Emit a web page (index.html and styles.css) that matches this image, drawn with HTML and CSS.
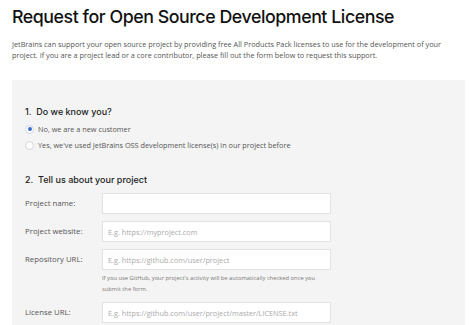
FILE: index.html
```html
<!DOCTYPE html>
<html>
<head>
  <meta charset="utf-8">
  <title>Request for Open Source Development License</title>
  <link rel="stylesheet" href="styles.css">
</head>
<body>
  <div class="page">
    <h1>Request for Open Source Development License</h1>
    <p class="intro">JetBrains can support your open source project by providing free All Products Pack licenses to use for the development of your project. If you are a project lead or a core contributor, please fill out the form below to request this support.</p>

    <form class="panel">
      <!-- 1. Do we know you -->
      <h2>1.&nbsp; Do we know you?</h2>
      <label class="radio">
        <input type="radio" name="known" checked>
        <span class="dot"></span>
        No, we are a new customer
      </label>
      <label class="radio">
        <input type="radio" name="known">
        <span class="dot"></span>
        Yes, we've used JetBrains OSS development license(s) in our project before
      </label>

      <!-- 2. Project -->
      <h2 class="second">2.&nbsp; Tell us about your project</h2>
      <div class="field">
        <label>Project name:</label>
        <div class="control"><input type="text"></div>
      </div>
      <div class="field">
        <label>Project website:</label>
        <div class="control"><input type="text" placeholder="E.g. https://myproject.com"></div>
      </div>
      <div class="field">
        <label>Repository URL:</label>
        <div class="control">
          <input type="text" placeholder="E.g. https://github.com/user/project">
          <div class="hint">If you use GitHub, your project's activity will be automatically checked once you submit the form.</div>
        </div>
      </div>
      <div class="field">
        <label>License URL:</label>
        <div class="control"><input type="text" placeholder="E.g. https://github.com/user/project/master/LICENSE.txt"></div>
      </div>
    </form>
  </div>
</body>
</html>
```

FILE: styles.css
```css
body {
  margin: 0;
  background: white;
  font-family: "Open Sans", sans-serif;
  color: #333;
}

.page {
  padding: 5px 9px 0 12px;
}

h1 {
  margin: 0;
  font-family: Inter, sans-serif;
  font-weight: 500;
  font-size: 17.8px;
  letter-spacing: -0.45px;
  color: #111;
  line-height: 24px;
  white-space: nowrap;
}

.intro {
  margin: 10px 0 0 0;
  font-size: 7.3px;
  line-height: 11px;
  color: #555;
}

.panel {
  margin-top: 19px;
  background: #f4f4f4;
  padding: 25px 13px 20px 13px;
}

.panel h2 {
  margin: 0 0 2px 0;
  font-family: Inter, sans-serif;
  font-weight: 500;
  font-size: 9px;
  line-height: 14px;
  color: #222;
}

.panel h2.second {
  margin-top: 20px;
  margin-bottom: 6px;
}

.radio {
  display: flex;
  align-items: center;
  gap: 4px;
  height: 16px;
  font-size: 7.3px;
  color: #555;
}

.radio input {
  display: none;
}

.dot {
  width: 9px;
  height: 9px;
  border-radius: 50%;
  border: 1px solid #d4d4d4;
  background: white;
  box-sizing: border-box;
  position: relative;
}

.radio input:checked + .dot {
  border-color: #cdd6ee;
}

.radio input:checked + .dot::after {
  content: "";
  position: absolute;
  left: 1.5px;
  top: 1.5px;
  width: 4px;
  height: 4px;
  border-radius: 50%;
  background: #3c6fd1;
}

.field {
  display: flex;
  margin-bottom: 7px;
}

.field label {
  width: 77px;
  flex: none;
  font-size: 7.8px;
  line-height: 21px;
  color: #555;
}

.control {
  width: 229px;
}

.control input {
  display: block;
  width: 100%;
  height: 21px;
  box-sizing: border-box;
  border: 1px solid #e2e2e2;
  background: white;
  padding: 0 5px;
  font-family: "Open Sans", sans-serif;
  font-size: 7.3px;
  color: #333;
}

.control input::placeholder {
  color: #aaa;
}

.hint {
  margin: 3px 0 0 0;
  font-size: 5.8px;
  line-height: 11px;
  color: #777;
}
```
